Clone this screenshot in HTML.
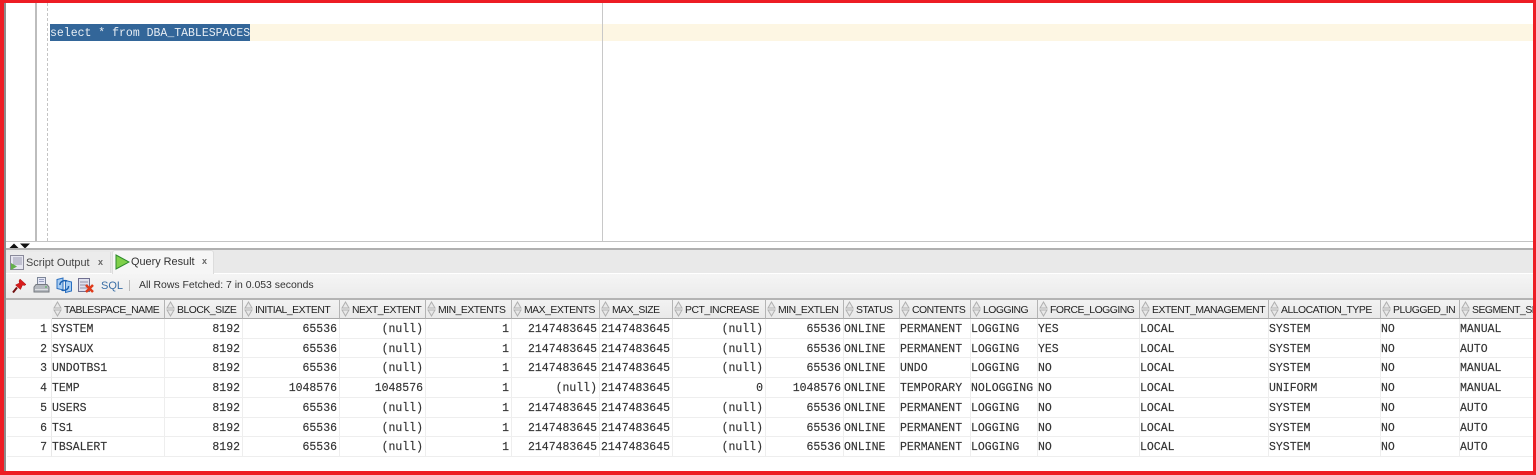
<!DOCTYPE html>
<html><head><meta charset="utf-8"><style>
html,body{margin:0;padding:0;background:#fff}
#p{position:relative;width:1536px;height:475px;overflow:hidden;background:#fff;font-family:"Liberation Sans",sans-serif;color:#333}
.a{position:absolute}
table{position:absolute;left:7px;top:298px;border-collapse:separate;border-spacing:0;table-layout:fixed;width:1527px;filter:blur(.3px)}
th{height:21px;padding:3px 0 0 12px;font:normal 10.4px/15px "Liberation Sans",sans-serif;letter-spacing:-.48px;color:#222;background:linear-gradient(#f2f2f2,#e9e9e9);border-top:2px solid #b4b4b4;border-bottom:1px solid #a8a8a8;border-right:1px solid #b4b4b4;text-align:left;white-space:nowrap;overflow:hidden;position:relative;box-sizing:border-box;vertical-align:top}
th:first-child{background:#efefef;border-right:0;border-bottom:0;border-top:2px solid #b4b4b4}
th svg{position:absolute;left:1px;top:1px}
td{padding:3px 2px 0 0;font:11.5px/16px "Liberation Mono",monospace;-webkit-text-stroke:.15px #333;color:#333;border-bottom:1px solid #eee;border-right:1px solid #eee;white-space:nowrap;overflow:hidden;box-sizing:border-box;vertical-align:top}
td.r{text-align:right}
td:first-child{padding-right:4px;border-right:1px solid #e8e8e8}
.h20 td{height:20px}.h19 td{height:19px;padding-top:4px;line-height:14px}
</style></head><body><div id="p">
<svg width="0" height="0" style="position:absolute"><defs><g id="s"><path d="M4.500 1L8 7H1z" fill="#e8e8e8" stroke="#b0b0b0"/><path d="M4.500 15L8 9H1z" fill="#e8e8e8" stroke="#b0b0b0"/></g></defs></svg>
<div class="a" style="left:4px;top:3px;width:2px;height:468px;background:#8c8c8c"></div>
<div class="a" style="left:6px;top:298px;width:2px;height:21px;background:#efefef"></div>
<div class="a" style="left:6px;top:298px;width:2px;height:2px;background:#b4b4b4"></div>
<div class="a" style="left:35px;top:3px;width:2px;height:238px;background:#bdbdbd"></div>
<div class="a" style="left:47px;top:3px;height:238px;border-left:1px dashed #c4c4c4"></div>
<div class="a" style="left:50px;top:24px;width:1483px;height:17px;background:#fdf6e3"></div>
<div class="a" style="left:50px;top:24px;width:200px;height:17px;background:#336699"></div>
<div class="a" style="left:602px;top:3px;width:1px;height:238px;background:#c8c8c8"></div>
<div class="a" style="left:50px;top:25px;font:11.500px/17px 'Liberation Mono',monospace;color:#e8eef4;white-space:pre;filter:blur(.3px)">select * from DBA_TABLESPACES</div>

<div class="a" style="left:6px;top:241px;width:1527px;height:1px;background:#c4c4c4"></div>
<svg class="a" style="left:8px;top:243px" width="24" height="6"><path d="M1 5.500L6 .5L11 5.500Z" fill="#111"/><path d="M12 .5H22L17 5.500Z" fill="#111"/></svg>
<div class="a" style="left:6px;top:248px;width:1527px;height:2px;background:#b0b0b0"></div>
<div class="a" style="left:6px;top:250px;width:1527px;height:23px;background:#e9e9e9"></div>
<div class="a" style="left:6px;top:273px;width:1527px;height:1px;background:#fff"></div>
<div class="a" style="left:6px;top:274px;width:1527px;height:24px;background:linear-gradient(#f5f5f5,#ebebeb)"></div>

<div class="a" style="left:7px;top:252px;width:103px;height:21px;background:#ececec;border-right:1px solid #ddd"></div>
<svg class="a" style="left:10px;top:255px" width="15" height="16"><rect x=".5" y=".5" width="13" height="14" fill="#e6e6f0" stroke="#8a8a9a"/><path d="M3 3h9M3 5h9M3 7h9M3 9h9" stroke="#9a9ab0"/><path d="M1 8l6 3.500-6 3.500z" fill="#63b04a"/></svg>
<div class="a" style="left:26px;top:255px;font-size:10.900px;line-height:16px;color:#444">Script Output</div>
<div class="a" style="left:98px;top:254px;font:bold 9px/16px 'Liberation Sans',sans-serif;color:#666">x</div>
<div class="a" style="left:112px;top:250px;width:102px;height:24px;background:#f6f6f6;border:1px solid #dcdcdc;border-bottom:0;border-radius:3px 3px 0 0;box-sizing:border-box"></div>
<svg class="a" style="left:115px;top:254px" width="15" height="16"><path d="M1 1l13 7-13 7z" fill="#7fd04a" stroke="#2c8a2c"/></svg>
<div class="a" style="left:131px;top:254px;font-size:10.900px;line-height:16px;color:#333">Query Result</div>
<div class="a" style="left:202px;top:253px;font:bold 9px/16px 'Liberation Sans',sans-serif;color:#666">x</div>

<svg class="a" style="left:11px;top:278px" width="16" height="16"><path d="M9 1L15 6.500L13.500 7.500L11.500 7L9.500 11.500L4.500 7L8.500 5L8 3Z" fill="#d81c1c" stroke="#a81010" stroke-width=".5"/><path d="M6 9.500L2 14.500" stroke="#701010" stroke-width="2"/></svg>
<svg class="a" style="left:33px;top:277px" width="17" height="16"><path d="M4.500 .5H12.500V8H4.500Z" fill="#e4e6f4" stroke="#7c8698"/><path d="M6 2.500H11M6 4.500H11" stroke="#9aa2c0"/><path d="M3 7.500H14L16 10V15H1V10Z" fill="#b4b8be" stroke="#767a80"/><path d="M2 12.500H15" stroke="#dcdee0"/><path d="M12 10h2" stroke="#4caf50"/></svg>
<svg class="a" style="left:56px;top:277px" width="17" height="17"><path d="M1 2.500L7 1V13L1 11.500Z" fill="#a8cdf2" stroke="#2a6fc0"/><path d="M15.500 5L9.500 3.500V15.500L15.500 14Z" fill="#a8cdf2" stroke="#2a6fc0"/><path d="M4 8a5 4 0 0 1 7-4M12.500 9a5 4 0 0 1-7 4" fill="none" stroke="#1a5fb0" stroke-width="1.500"/></svg>
<svg class="a" style="left:78px;top:277px" width="17" height="17"><rect x=".5" y="1.500" width="11" height="13" fill="#dfe0ee" stroke="#707090"/><path d="M2 5h8M2 8h8M2 11h8" stroke="#9090a8"/><path d="M8 8l7 7M15 8l-7 7" stroke="#e03a1a" stroke-width="2.500"/></svg>
<div class="a" style="left:101px;top:278px;font-size:11px;line-height:16px;color:#3a6ea5">SQL</div>
<div class="a" style="left:129px;top:280px;width:1px;height:11px;background:#bbb"></div>
<div class="a" style="left:139px;top:278px;font-size:10.450px;line-height:16px;color:#333;white-space:nowrap">All Rows Fetched: 7 in 0.053 seconds</div>

<table>
<colgroup><col style="width:45px"><col style="width:113px"><col style="width:78px"><col style="width:97px"><col style="width:86px"><col style="width:86px"><col style="width:88px"><col style="width:73px"><col style="width:93px"><col style="width:78px"><col style="width:56px"><col style="width:71px"><col style="width:67px"><col style="width:102px"><col style="width:129px"><col style="width:112px"><col style="width:79px"><col style="width:74px"></colgroup>
<tr><th></th><th><svg width="9" height="16"><use href="#s"/></svg>TABLESPACE_NAME</th><th><svg width="9" height="16"><use href="#s"/></svg>BLOCK_SIZE</th><th><svg width="9" height="16"><use href="#s"/></svg>INITIAL_EXTENT</th><th><svg width="9" height="16"><use href="#s"/></svg>NEXT_EXTENT</th><th><svg width="9" height="16"><use href="#s"/></svg>MIN_EXTENTS</th><th><svg width="9" height="16"><use href="#s"/></svg>MAX_EXTENTS</th><th><svg width="9" height="16"><use href="#s"/></svg>MAX_SIZE</th><th><svg width="9" height="16"><use href="#s"/></svg>PCT_INCREASE</th><th><svg width="9" height="16"><use href="#s"/></svg>MIN_EXTLEN</th><th><svg width="9" height="16"><use href="#s"/></svg>STATUS</th><th><svg width="9" height="16"><use href="#s"/></svg>CONTENTS</th><th><svg width="9" height="16"><use href="#s"/></svg>LOGGING</th><th><svg width="9" height="16"><use href="#s"/></svg>FORCE_LOGGING</th><th><svg width="9" height="16"><use href="#s"/></svg>EXTENT_MANAGEMENT</th><th><svg width="9" height="16"><use href="#s"/></svg>ALLOCATION_TYPE</th><th><svg width="9" height="16"><use href="#s"/></svg>PLUGGED_IN</th><th><svg width="9" height="16"><use href="#s"/></svg>SEGMENT_SPACE</th></tr>
<tr class="h20"><td class="r">1</td><td>SYSTEM</td><td class="r">8192</td><td class="r">65536</td><td class="r">(null)</td><td class="r">1</td><td class="r">2147483645</td><td class="r">2147483645</td><td class="r">(null)</td><td class="r">65536</td><td>ONLINE</td><td>PERMANENT</td><td>LOGGING</td><td>YES</td><td>LOCAL</td><td>SYSTEM</td><td>NO</td><td>MANUAL</td></tr>
<tr class="h19"><td class="r">2</td><td>SYSAUX</td><td class="r">8192</td><td class="r">65536</td><td class="r">(null)</td><td class="r">1</td><td class="r">2147483645</td><td class="r">2147483645</td><td class="r">(null)</td><td class="r">65536</td><td>ONLINE</td><td>PERMANENT</td><td>LOGGING</td><td>YES</td><td>LOCAL</td><td>SYSTEM</td><td>NO</td><td>AUTO</td></tr>
<tr class="h20"><td class="r">3</td><td>UNDOTBS1</td><td class="r">8192</td><td class="r">65536</td><td class="r">(null)</td><td class="r">1</td><td class="r">2147483645</td><td class="r">2147483645</td><td class="r">(null)</td><td class="r">65536</td><td>ONLINE</td><td>UNDO</td><td>LOGGING</td><td>NO</td><td>LOCAL</td><td>SYSTEM</td><td>NO</td><td>MANUAL</td></tr>
<tr class="h20"><td class="r">4</td><td>TEMP</td><td class="r">8192</td><td class="r">1048576</td><td class="r">1048576</td><td class="r">1</td><td class="r">(null)</td><td class="r">2147483645</td><td class="r">0</td><td class="r">1048576</td><td>ONLINE</td><td>TEMPORARY</td><td>NOLOGGING</td><td>NO</td><td>LOCAL</td><td>UNIFORM</td><td>NO</td><td>MANUAL</td></tr>
<tr class="h20"><td class="r">5</td><td>USERS</td><td class="r">8192</td><td class="r">65536</td><td class="r">(null)</td><td class="r">1</td><td class="r">2147483645</td><td class="r">2147483645</td><td class="r">(null)</td><td class="r">65536</td><td>ONLINE</td><td>PERMANENT</td><td>LOGGING</td><td>NO</td><td>LOCAL</td><td>SYSTEM</td><td>NO</td><td>AUTO</td></tr>
<tr class="h19"><td class="r">6</td><td>TS1</td><td class="r">8192</td><td class="r">65536</td><td class="r">(null)</td><td class="r">1</td><td class="r">2147483645</td><td class="r">2147483645</td><td class="r">(null)</td><td class="r">65536</td><td>ONLINE</td><td>PERMANENT</td><td>LOGGING</td><td>NO</td><td>LOCAL</td><td>SYSTEM</td><td>NO</td><td>AUTO</td></tr>
<tr class="h20"><td class="r">7</td><td>TBSALERT</td><td class="r">8192</td><td class="r">65536</td><td class="r">(null)</td><td class="r">1</td><td class="r">2147483645</td><td class="r">2147483645</td><td class="r">(null)</td><td class="r">65536</td><td>ONLINE</td><td>PERMANENT</td><td>LOGGING</td><td>NO</td><td>LOCAL</td><td>SYSTEM</td><td>NO</td><td>AUTO</td></tr>
</table>

<div class="a" style="left:0;top:0;width:1536px;height:3px;background:#ed1c24"></div>
<div class="a" style="left:0;top:471px;width:1536px;height:4px;background:#ed1c24"></div>
<div class="a" style="left:0;top:0;width:4px;height:475px;background:#ed1c24"></div>
<div class="a" style="left:1533px;top:0;width:3px;height:475px;background:#ed1c24"></div>
</div></body></html>
